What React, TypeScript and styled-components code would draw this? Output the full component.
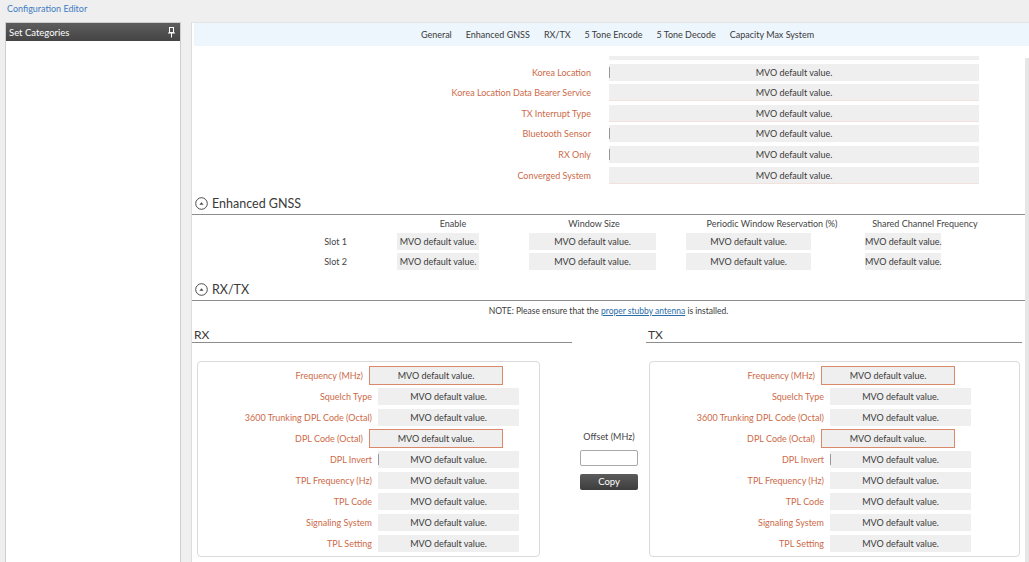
import * as React from 'react';
import styled, { createGlobalStyle } from 'styled-components';

const GlobalStyle = createGlobalStyle`
  html, body {
    margin: 0;
    padding: 0;
    background: #efefef;
  }
  * {
    box-sizing: border-box;
  }
`;

const tabs = ['General', 'Enhanced GNSS', 'RX/TX', '5 Tone Encode', '5 Tone Decode', 'Capacity Max System'];

const topFields = [
  { name: 'Korea Location', tick: true },
  { name: 'Korea Location Data Bearer Service', tick: false },
  { name: 'TX Interrupt Type', tick: false },
  { name: 'Bluetooth Sensor', tick: true },
  { name: 'RX Only', tick: true },
  { name: 'Converged System', tick: false }
];

// field width, header box width (header is centred in it)
const gnssColumns = [
  { title: 'Enable', field: 82, head: 112 },
  { title: 'Window Size', field: 127, head: 130 },
  { title: 'Periodic Window Reservation (%)', field: 125, head: 172 },
  { title: 'Shared Channel Frequency', field: 76, head: 120 }
];

const radioFields = [
  { name: 'Frequency (MHz)', hl: true },
  { name: 'Squelch Type' },
  { name: '3600 Trunking DPL Code (Octal)' },
  { name: 'DPL Code (Octal)', hl: true },
  { name: 'DPL Invert', tick: true },
  { name: 'TPL Frequency (Hz)' },
  { name: 'TPL Code' },
  { name: 'Signaling System' },
  { name: 'TPL Setting' }
];

const DEFAULT = 'MVO default value.';

const CollapseIcon = () => (
  <svg width="13" height="13" viewBox="0 0 13 13">
    <circle cx="6.5" cy="6.5" r="5.8" fill="none" stroke="#4a4a4a" strokeWidth="1" />
    <path d="M4.4 7.7 L6.5 5.2 L8.6 7.7 Z" fill="#4a4a4a" />
  </svg>
);

const PinIcon = () => (
  <svg width="7" height="11" viewBox="0 0 7 11">
    <rect x="1.5" y="0.5" width="4" height="5" fill="none" stroke="#fff" strokeWidth="1" />
    <line x1="0" y1="6" x2="7" y2="6" stroke="#fff" strokeWidth="1" />
    <line x1="3.5" y1="6" x2="3.5" y2="10.5" stroke="#fff" strokeWidth="1" />
  </svg>
);

const RadioPanel = ( { ml, width }: { ml: number, width: number } ) => (
  <Panel $ml={ ml } $w={ width }>
    {
      radioFields.map( ( f, i ) =>
        <PanelRow key={ i }>
          <PanelLabel $hl={ !!f.hl }>{ f.name }</PanelLabel>
          <PanelValue $hl={ !!f.hl } $tick={ !!f.tick }>{ DEFAULT }</PanelValue>
        </PanelRow>
      )
    }
  </Panel>
);

export default function App () {
  return (
    <Page>
      <GlobalStyle />
      <TitleBar>Configuration Editor</TitleBar>
      <Body>
        <Sidebar>
          <SidebarHeader>
            Set Categories
            <PinIcon />
          </SidebarHeader>
        </Sidebar>
        <Main>
          <TabBar>
            { tabs.map( t => <Tab key={ t }>{ t }</Tab> ) }
          </TabBar>
          <Scroller>
            <Content>
              <FieldList>
                <StubField />
                {
                  topFields.map( f =>
                    <FieldRow key={ f.name }>
                      <FieldLabel>{ f.name }</FieldLabel>
                      <WideValue $tick={ f.tick }>{ DEFAULT }</WideValue>
                    </FieldRow>
                  )
                }
              </FieldList>

              <SectionHeader $top={ 10 }>
                <CollapseIcon />
                Enhanced GNSS
              </SectionHeader>
              <GnssGrid>
                <span />
                { gnssColumns.map( c => <ColHead key={ c.title } $w={ c.head }>{ c.title }</ColHead> ) }
                {
                  ['Slot 1', 'Slot 2'].map( slot =>
                    <React.Fragment key={ slot }>
                      <SlotLabel>{ slot }</SlotLabel>
                      { gnssColumns.map( c => <GridValue key={ c.title } $w={ c.field }>{ DEFAULT }</GridValue> ) }
                    </React.Fragment>
                  )
                }
              </GnssGrid>

              <SectionHeader $top={ 10 }>
                <CollapseIcon />
                RX/TX
              </SectionHeader>
              <Note>
                NOTE: Please ensure that the <NoteLink>proper stubby antenna</NoteLink> is installed.
              </Note>
              <Split>
                <SubHead>RX</SubHead>
                <span />
                <SubHead $mr={ 3 }>TX</SubHead>

                <RadioPanel ml={ 5 } width={ 343 } />
                <Middle>
                  <OffsetLabel>Offset (MHz)</OffsetLabel>
                  <OffsetInput />
                  <CopyButton>Copy</CopyButton>
                </Middle>
                <RadioPanel ml={ 3 } width={ 371 } />
              </Split>
            </Content>
            <ScrollTrack />
          </Scroller>
        </Main>
      </Body>
    </Page>
  );
}

const Page = styled.div`
  width: 1029px;
  height: 562px;
  overflow: hidden;
  display: flex;
  flex-direction: column;
  background: #efefef;
  font-family: Lato, "Open Sans", sans-serif;
  font-size: 9px;
  color: #444;
`;

const TitleBar = styled.div`
  height: 22px;
  padding: 3px 0 0 7px;
  line-height: 12px;
  color: #3f7cc4;
`;

const Body = styled.div`
  flex: 1;
  min-height: 0;
  display: flex;
  padding-left: 5px;
`;

const Sidebar = styled.div`
  width: 176px;
  background: #fff;
  border: 1px solid #cdcdcd;
  border-bottom: none;
`;

const SidebarHeader = styled.div`
  height: 18px;
  display: flex;
  align-items: center;
  justify-content: space-between;
  padding: 0 5px 0 3px;
  background: linear-gradient(#5d5d5d, #444);
  color: #fff;
  font-size: 9.5px;
`;

const Main = styled.div`
  flex: 1;
  min-width: 0;
  margin-left: 10px;
  display: flex;
  flex-direction: column;
  background: #fff;
  border-left: 1px solid #dcdcdc;
  border-top: 1px solid #e4e4e4;
`;

const TabBar = styled.div`
  height: 23px;
  margin-left: 2px;
  padding-left: 12px;
  display: flex;
  justify-content: center;
  align-items: center;
  background: #edf5fd;
`;

const Tab = styled.div`
  padding: 0 7px;
  color: #3a3a3a;
  white-space: nowrap;
`;

const Scroller = styled.div`
  flex: 1;
  min-height: 0;
  display: flex;
  overflow: hidden;
`;

const Content = styled.div`
  flex: 1;
  min-width: 0;
`;

const ScrollTrack = styled.div`
  width: 4px;
  margin-top: 12px;
  background: #e6e6e6;
`;

const FieldList = styled.div`
  display: flex;
  flex-direction: column;
  gap: 3.6px;
  padding-top: 10px;
`;

const StubField = styled.div`
  margin-left: 417px;
  width: 370px;
  height: 4px;
  background: #efefef;
`;

const FieldRow = styled.div`
  display: grid;
  grid-template-columns: 399px 370px;
  column-gap: 18px;
  align-items: center;
  height: 17px;
`;

const FieldLabel = styled.div`
  text-align: right;
  white-space: nowrap;
  color: #cc6a48;
`;

const ValueBox = styled.div<{ $tick?: boolean }>`
  position: relative;
  height: 17px;
  line-height: 17px;
  text-align: center;
  white-space: nowrap;
  background: #efefef;
  color: #3a3a3a;

  &::before {
    content: '';
    display: ${ p => p.$tick ? 'block' : 'none' };
    position: absolute;
    left: 0;
    top: 3px;
    bottom: 3px;
    width: 1px;
    background: #999;
  }
`;

const WideValue = styled(ValueBox)`
  box-shadow: ${ p => p.$tick ? 'none' : 'inset 0 -1px 0 #f1e2dc' };
`;

const SectionHeader = styled.div<{ $top: number }>`
  margin-top: ${ p => p.$top }px;
  height: 21px;
  display: flex;
  align-items: center;
  gap: 4px;
  padding-left: 3px;
  border-bottom: 1.5px solid #8d8d8d;
  font-size: 12.5px;
  color: #3a3a3a;
`;

const GnssGrid = styled.div`
  display: grid;
  grid-template-columns: 205px 132px 157px 179px 1fr;
  grid-template-rows: 12px 17px 17px;
  row-gap: 3px;
  padding-top: 3px;
  align-items: center;
`;

const ColHead = styled.div<{ $w: number }>`
  width: ${ p => p.$w }px;
  display: flex;
  justify-content: center;
  white-space: nowrap;
`;

const SlotLabel = styled.div`
  text-align: right;
  padding-right: 50px;
`;

const GridValue = styled(ValueBox)<{ $w: number }>`
  width: ${ p => p.$w }px;
`;

const Note = styled.div`
  margin-top: 3px;
  height: 14px;
  line-height: 14px;
  text-align: center;
  font-size: 8.5px;
  color: #3a3a3a;
`;

const NoteLink = styled.span`
  color: #2b6ea8;
  text-decoration: underline;
`;

const Split = styled.div`
  margin-top: 10px;
  display: grid;
  grid-template-columns: 380px 74px 1fr;
  row-gap: 18px;
`;

const SubHead = styled.div<{ $mr?: number }>`
  height: 15.5px;
  margin-right: ${ p => p.$mr || 0 }px;
  padding-left: 2px;
  font-size: 12px;
  line-height: 14px;
  border-bottom: 1.5px solid #8d8d8d;
  color: #3a3a3a;
`;

const Panel = styled.div<{ $ml: number, $w: number }>`
  margin-left: ${ p => p.$ml }px;
  width: ${ p => p.$w }px;
  padding: 5px 0 4px;
  display: flex;
  flex-direction: column;
  gap: 4px;
  border: 1px solid #dadada;
  border-radius: 4px;
`;

const PanelRow = styled.div`
  height: 17px;
  display: flex;
  align-items: center;
`;

const PanelLabel = styled.div<{ $hl: boolean }>`
  width: 174px;
  flex-shrink: 0;
  padding-right: ${ p => p.$hl ? 9 : 0 }px;
  text-align: right;
  white-space: nowrap;
  color: #cc6a48;
`;

const PanelValue = styled(ValueBox)<{ $hl: boolean }>`
  flex-shrink: 0;
  margin-left: ${ p => p.$hl ? -3 : 6 }px;
  width: ${ p => p.$hl ? 134 : 141 }px;
  height: ${ p => p.$hl ? 19 : 17 }px;
  line-height: 17px;
  border: ${ p => p.$hl ? '1px solid #d9896a' : 'none' };
`;

const Middle = styled.div`
  display: flex;
  flex-direction: column;
  align-items: center;
  justify-content: center;
  padding-top: 2px;
`;

const OffsetLabel = styled.div`
  height: 12px;
  line-height: 12px;
`;

const OffsetInput = styled.div`
  margin-top: 7px;
  width: 58px;
  height: 16px;
  background: #fff;
  border: 1px solid #a9a9a9;
  border-radius: 2px;
`;

const CopyButton = styled.div`
  margin-top: 8px;
  width: 58px;
  height: 16px;
  line-height: 16px;
  text-align: center;
  border-radius: 2px;
  background: linear-gradient(#5b5b5b, #3d3d3d);
  color: #fff;
  font-size: 9.5px;
`;
